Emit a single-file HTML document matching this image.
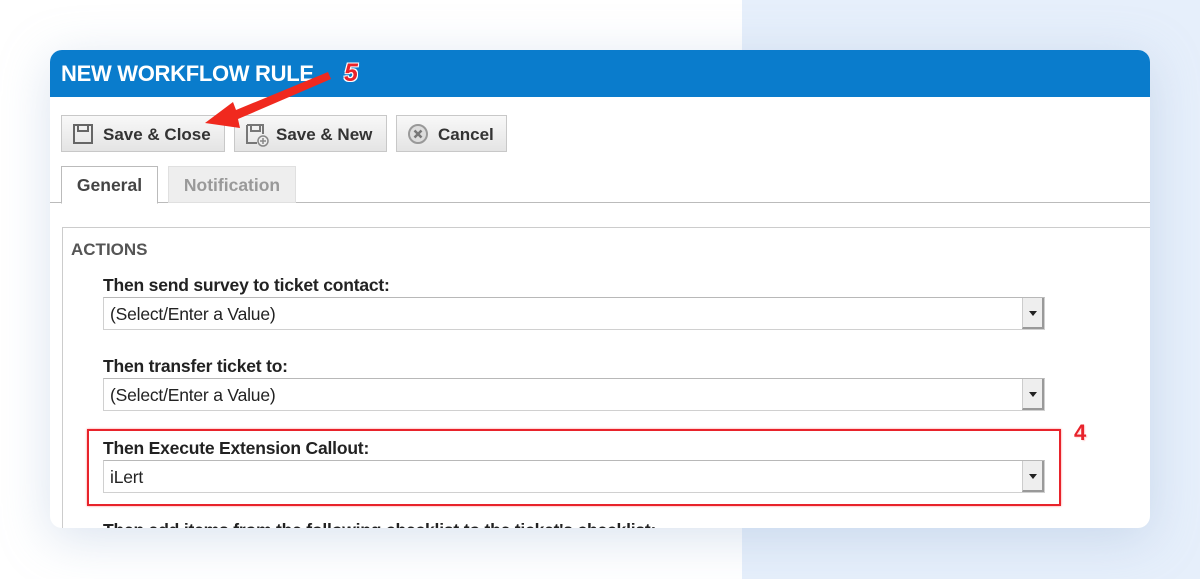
<!DOCTYPE html>
<html><head><style>
*{box-sizing:border-box;margin:0;padding:0}
body{width:1200px;height:579px;overflow:hidden;position:relative;font-family:"Liberation Sans",Arial,sans-serif;background:#fff}
.bgr{position:absolute;left:742px;top:0;width:458px;height:579px;background:#e6effb}
.card{position:absolute;left:50px;top:50px;width:1100px;height:478px;background:#fff;border-radius:12px;overflow:hidden;box-shadow:0 10px 50px rgba(150,175,210,.35)}
.hdr{height:47px;background:#0a7ccc;color:#fff;font-weight:bold;font-size:22px;padding:11px 0 0 11px;letter-spacing:-.3px}
.btn{position:absolute;top:65px;height:37px;border:1px solid #c8c8c8;background:linear-gradient(#f8f8f8,#e4e4e4);font-weight:bold;font-size:17px;color:#333;padding:9px 0 0 41px}
.tab{position:absolute;top:116px;height:37px;font-weight:bold;font-size:17.5px;padding:8px 0 0 0;text-align:center}
.lbl{position:absolute;left:53px;font-weight:bold;font-size:17.5px;color:#222;letter-spacing:-.2px}
.sel{position:absolute;left:53px;width:942px;height:33px;border:1px solid #d0d0d0;border-top-color:#b8b8b8;font-size:17.5px;color:#222;padding:6px 0 0 6px;background:#fff;letter-spacing:-.2px}
.sel i{position:absolute;right:0;top:0;width:22px;height:31px;background:#eee;border-left:1px solid #ccc;border-right:2px solid #999;border-bottom:2px solid #999}
.sel i:after{content:"";position:absolute;left:6px;top:13px;border:4px solid transparent;border-top:5px solid #222}
</style></head><body>
<div class="bgr"></div>
<div class="card">
<div class="hdr">NEW WORKFLOW RULE</div>
<div class="btn" style="left:11px;width:164px"><svg style="position:absolute;left:10px;top:7px" width="22" height="22" viewBox="0 0 22 22"><rect x="2" y="2" width="18" height="18" fill="none" stroke="#666" stroke-width="2"/><rect x="6" y="2" width="10" height="6" fill="none" stroke="#666" stroke-width="2"/></svg>Save &amp; Close</div>
<div class="btn" style="left:184px;width:153px"><svg style="position:absolute;left:10px;top:7px" width="24" height="24" viewBox="0 0 24 24"><path d="M2 2h16v9M2 2v18h10" fill="none" stroke="#777" stroke-width="2"/><rect x="6" y="2" width="9" height="6" fill="none" stroke="#777" stroke-width="2"/><circle cx="18" cy="18" r="5" fill="#eee" stroke="#888" stroke-width="1.5"/><path d="M18 15v6M15 18h6" stroke="#888" stroke-width="1.5"/></svg>Save &amp; New</div>
<div class="btn" style="left:346px;width:111px"><svg style="position:absolute;left:10px;top:7px" width="22" height="22" viewBox="0 0 22 22"><circle cx="11" cy="11" r="9" fill="#ddd" stroke="#999" stroke-width="2"/><path d="M7.5 7.5l7 7M14.5 7.5l-7 7" stroke="#777" stroke-width="2.5"/></svg>Cancel</div>
<div style="position:absolute;left:0;right:0;top:152px;border-top:1px solid #bbb"></div>
<div class="tab" style="left:11px;width:97px;border:1px solid #bbb;border-bottom:1px solid #fff;background:#fff;color:#444;height:38px">General</div>
<div class="tab" style="left:118px;width:128px;background:#eee;color:#999;border:1px solid #e0e0e0">Notification</div>
<div style="position:absolute;left:12px;right:0;top:177px;bottom:0;border-top:1px solid #ccc;border-left:1px solid #ccc">
<div style="position:absolute;left:8px;top:12px;font-weight:bold;font-size:17px;color:#555">ACTIONS</div>
<div class="lbl" style="top:47px;left:40px">Then send survey to ticket contact:</div>
<div class="sel" style="top:69px;left:40px">(Select/Enter a Value)<i></i></div>
<div class="lbl" style="top:128px;left:40px">Then transfer ticket to:</div>
<div class="sel" style="top:150px;left:40px">(Select/Enter a Value)<i></i></div>
<div class="lbl" style="top:210px;left:40px">Then Execute Extension Callout:</div>
<div class="sel" style="top:232px;left:40px">iLert<i></i></div>
<div class="lbl" style="top:292px;left:40px">Then add items from the following checklist to the ticket's checklist:</div>
</div>
<div style="position:absolute;left:37px;top:379px;width:974px;height:77px;border:2px solid #e8232b;box-shadow:0 0 2px #f88"></div>
<div style="position:absolute;left:1024px;top:370px;color:#e8232b;font-weight:bold;font-size:22px;text-shadow:0 0 2px #fff,1px 1px 1px #fcc">4</div>
<div style="position:absolute;left:294px;top:9px;color:#e8232b;font-weight:bold;font-size:25px;font-style:italic;text-shadow:-1px -1px 0 #fff,1px 1px 0 #fff,1px -1px 0 #fff,-1px 1px 0 #fff">5</div>
<svg style="position:absolute;left:0;top:0" width="400" height="120"><path d="M278 22 L186 60 L183 52 L155 73 L190 78 L188 69 L281 29 Z" fill="#f0291e"/></svg>
</div>
</body></html>
